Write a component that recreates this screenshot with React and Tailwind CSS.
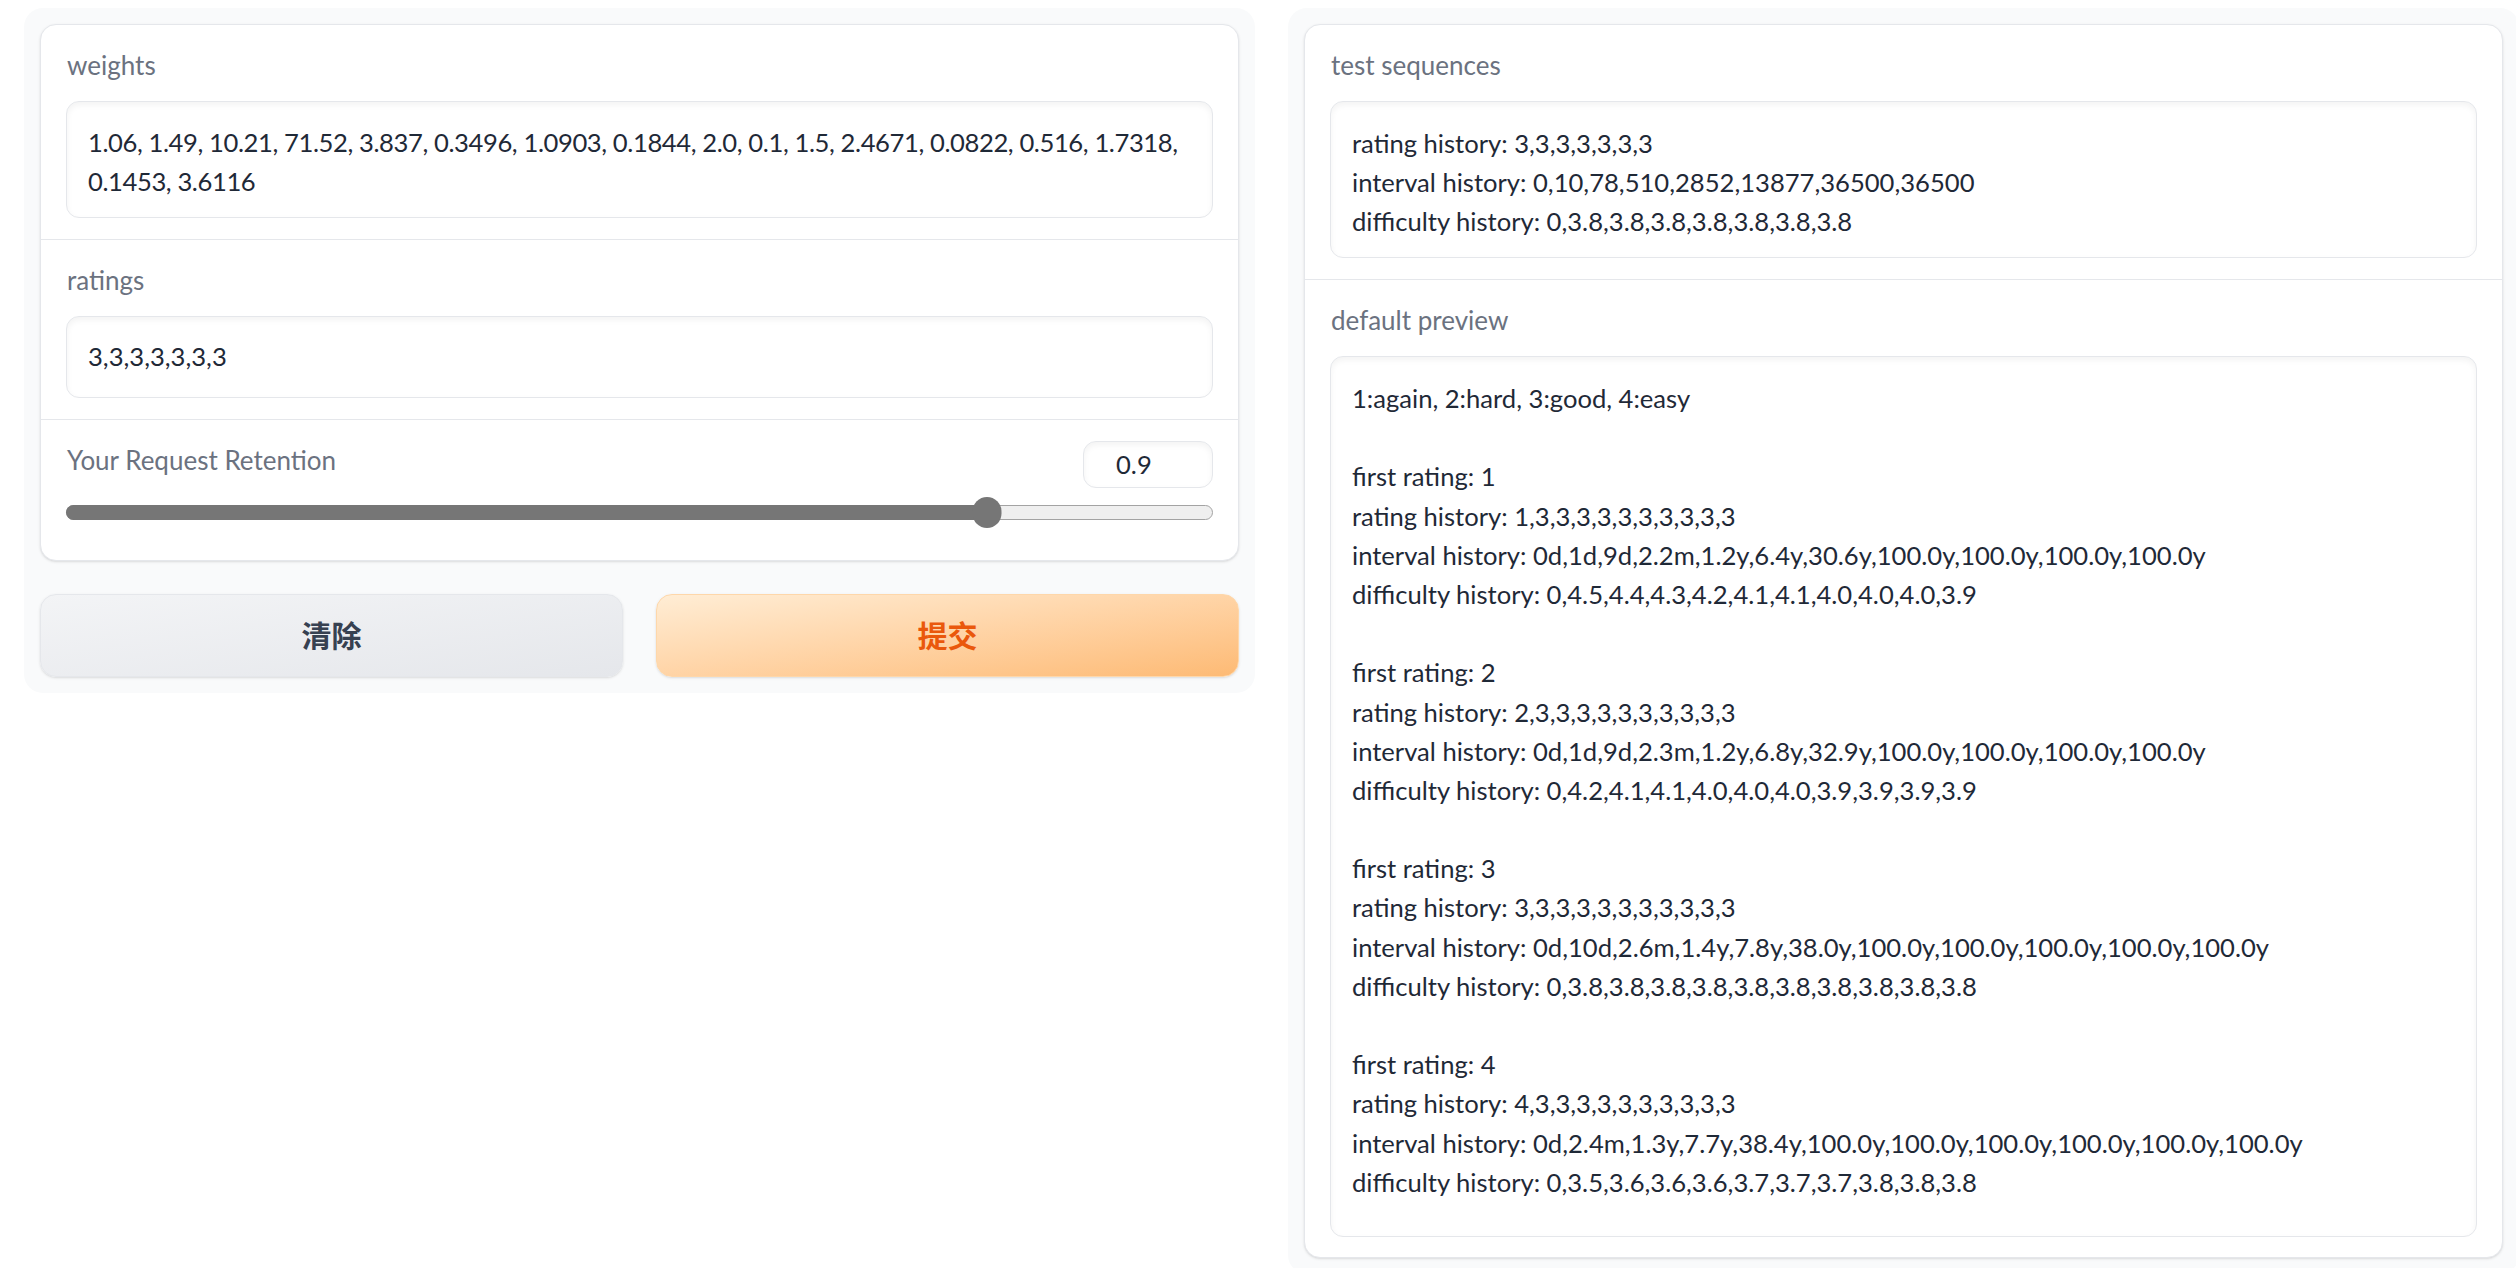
const weights = [
  '1.06, 1.49, 10.21, 71.52, 3.837, 0.3496, 1.0903, 0.1844, 2.0, 0.1, 1.5, 2.4671, 0.0822, 0.516, 1.7318,',
  '0.1453, 3.6116',
]

const testLines = [
  'rating history: 3,3,3,3,3,3,3',
  'interval history: 0,10,78,510,2852,13877,36500,36500',
  'difficulty history: 0,3.8,3.8,3.8,3.8,3.8,3.8,3.8',
]

const preview = [
  '1:again, 2:hard, 3:good, 4:easy',
  '',
  'first rating: 1',
  'rating history: 1,3,3,3,3,3,3,3,3,3,3',
  'interval history: 0d,1d,9d,2.2m,1.2y,6.4y,30.6y,100.0y,100.0y,100.0y,100.0y',
  'difficulty history: 0,4.5,4.4,4.3,4.2,4.1,4.1,4.0,4.0,4.0,3.9',
  '',
  'first rating: 2',
  'rating history: 2,3,3,3,3,3,3,3,3,3,3',
  'interval history: 0d,1d,9d,2.3m,1.2y,6.8y,32.9y,100.0y,100.0y,100.0y,100.0y',
  'difficulty history: 0,4.2,4.1,4.1,4.0,4.0,4.0,3.9,3.9,3.9,3.9',
  '',
  'first rating: 3',
  'rating history: 3,3,3,3,3,3,3,3,3,3,3',
  'interval history: 0d,10d,2.6m,1.4y,7.8y,38.0y,100.0y,100.0y,100.0y,100.0y,100.0y',
  'difficulty history: 0,3.8,3.8,3.8,3.8,3.8,3.8,3.8,3.8,3.8,3.8',
  '',
  'first rating: 4',
  'rating history: 4,3,3,3,3,3,3,3,3,3,3',
  'interval history: 0d,2.4m,1.3y,7.7y,38.4y,100.0y,100.0y,100.0y,100.0y,100.0y,100.0y',
  'difficulty history: 0,3.5,3.6,3.6,3.6,3.7,3.7,3.7,3.8,3.8,3.8',
]

function Label({ children }) {
  return <div className="text-[26px] leading-[33px] text-[#6b7280] pl-[1px]">{children}</div>
}

function Box({ children, className = '' }) {
  return (
    <div className={`border border-[#e5e7eb] rounded-[13px] bg-white shadow-[inset_0_3px_6px_rgba(0,0,0,0.05)] px-[21px] text-[25.6px] leading-[39.2px] text-[#1f2937] ${className}`}>
      {children}
    </div>
  )
}

function Lines({ lines }) {
  return lines.map((l, i) => (
    <div key={i} className="h-[39.2px] whitespace-nowrap">{l}</div>
  ))
}

export default function App() {
  return (
    <div className="w-[2516px] h-[1268px] overflow-hidden bg-white flex items-start gap-[33px] pl-[24px] pt-[8px] font-['Lato','Noto_Sans_CJK_SC',sans-serif]">
      {/* left column */}
      <div className="w-[1231px] shrink-0 bg-[#f9fafb] rounded-[19px] p-[16px] flex flex-col gap-[33px]">
        <div className="bg-white border border-[#e5e7eb] rounded-[16px] shadow-sm">
          <div className="px-[25px] pt-[24px] pb-[21px]">
            <Label>weights</Label>
            <Box className="mt-[19px] h-[117px] pt-[21px] tracking-[-0.4px]">
              <Lines lines={weights} />
            </Box>
          </div>
          <div className="px-[25px] pt-[24px] pb-[21px] border-t border-[#e5e7eb]">
            <Label>ratings</Label>
            <Box className="mt-[19px] h-[82px] flex items-center">3,3,3,3,3,3,3</Box>
          </div>
          <div className="px-[25px] pt-[21px] pb-[32px] border-t border-[#e5e7eb]">
            <div className="flex items-start justify-between">
              <div className="pt-[3px]"><Label>Your Request Retention</Label></div>
              <div className="w-[130px] h-[47px] border border-[#e5e7eb] rounded-[13px] shadow-[inset_0_3px_6px_rgba(0,0,0,0.05)] flex items-center pl-[32px] text-[25.6px] text-[#1f2937]">
                0.9
              </div>
            </div>
            <div className="relative mt-[9px] h-[31px] flex items-center">
              <div className="w-full h-[15px] rounded-full bg-[#efefef] border border-[#a3a3a3]" />
              <div className="absolute left-0 w-[80.3%] h-[15px] rounded-l-full bg-[#767676]" />
              <div className="absolute left-[80.3%] -translate-x-1/2 w-[29px] h-[31px] rounded-full bg-[#767676]" />
            </div>
          </div>
        </div>
        <div className="grid grid-cols-2 gap-[33px] h-[83px]">
          <button className="rounded-[16px] border border-[#e5e7eb] bg-gradient-to-br from-[#f3f4f6] to-[#e5e7eb] shadow-sm text-[30px] font-bold text-[#374151]">
            清除
          </button>
          <button className="rounded-[16px] border border-[#fed7aa] bg-gradient-to-br from-[#ffedd5] to-[#fdba74] shadow-sm text-[30px] font-bold text-[#ea580c]">
            提交
          </button>
        </div>
      </div>

      {/* right column */}
      <div className="w-[1231px] shrink-0 bg-[#f9fafb] rounded-[19px] p-[16px]">
        <div className="bg-white border border-[#e5e7eb] rounded-[16px] shadow-sm">
          <div className="px-[25px] pt-[24px] pb-[21px]">
            <Label>test sequences</Label>
            <Box className="mt-[19px] h-[157px] pt-[22px]">
              <Lines lines={testLines} />
            </Box>
          </div>
          <div className="px-[25px] pt-[24px] pb-[20px] border-t border-[#e5e7eb]">
            <Label>default preview</Label>
            <Box className="mt-[19px] h-[881px] pt-[22px]">
              <Lines lines={preview} />
            </Box>
          </div>
        </div>
      </div>
    </div>
  )
}
